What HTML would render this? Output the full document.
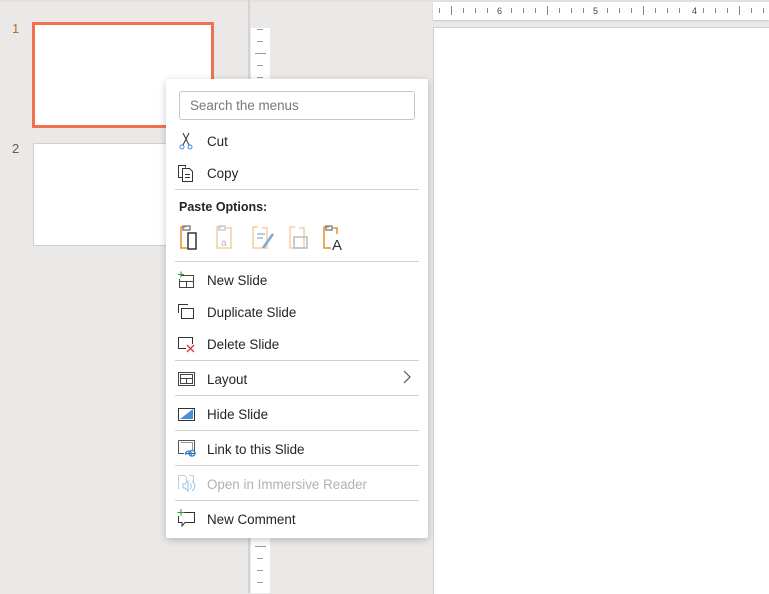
<!DOCTYPE html>
<html><head><style>
body{margin:0;width:769px;height:593px;overflow:hidden;background:#ebe9e7;font-family:"Liberation Sans",sans-serif;position:relative}
.a{position:absolute}
.menu{left:166px;top:79px;width:262px;height:459px;background:#fff;box-shadow:0 2px 8px rgba(0,0,0,.22);border-radius:2px}
.it{position:absolute;left:41px;font-size:13.4px;color:#252423}
.sep{position:absolute;left:9px;width:244px;height:1px;background:#d1d1d1}
.ic{position:absolute;left:11px}
</style></head><body>
<div class="a" style="left:0;top:0;width:769px;height:2px;background:#e3e1df"></div>
<div class="a" style="left:248px;top:0;width:2px;height:593px;background:#d6d4d2"></div>
<div class="a" style="left:12px;top:21px;font-size:13px;color:#c5691a">1</div>
<div class="a" style="left:32px;top:22px;width:176px;height:100px;border:3px solid #f07150;background:#fff"></div>
<div class="a" style="left:12px;top:141px;font-size:13px;color:#605e5c">2</div>
<div class="a" style="left:33px;top:143px;width:180px;height:101px;border:1px solid #d2d0ce;background:#fff"></div>
<div class="a" style="left:251px;top:28px;width:19px;height:565px;background:#fff"></div>
<svg class="a" style="left:251px;top:28px" width="19" height="565"><g stroke="#999">
<line x1="6" y1="1.5" x2="12" y2="1.5"/><line x1="6" y1="13.5" x2="12" y2="13.5"/><line x1="4" y1="25.5" x2="15" y2="25.5"/><line x1="6" y1="37.5" x2="12" y2="37.5"/><line x1="6" y1="49.5" x2="12" y2="49.5"/>
<line x1="4" y1="518.5" x2="15" y2="518.5"/><line x1="6" y1="530.5" x2="12" y2="530.5"/><line x1="6" y1="542.5" x2="12" y2="542.5"/><line x1="6" y1="554.5" x2="12" y2="554.5"/></g></svg>
<div class="a" style="left:433px;top:2px;width:336px;height:18px;background:#fff;box-shadow:0 1px 2px rgba(0,0,0,.15)"></div>
<svg class="a" style="left:433px;top:2px" width="336" height="18" font-size="9" fill="#444" font-family="Liberation Sans"><g stroke="#888">
<line x1="6.5" y1="6" x2="6.5" y2="11"/><line x1="18.5" y1="4" x2="18.5" y2="13"/><line x1="30.5" y1="6" x2="30.5" y2="11"/><line x1="42.5" y1="6" x2="42.5" y2="11"/><line x1="54.5" y1="6" x2="54.5" y2="11"/>
<line x1="78.5" y1="6" x2="78.5" y2="11"/><line x1="90.5" y1="6" x2="90.5" y2="11"/><line x1="102.5" y1="6" x2="102.5" y2="11"/><line x1="114.5" y1="4" x2="114.5" y2="13"/><line x1="126.5" y1="6" x2="126.5" y2="11"/><line x1="138.5" y1="6" x2="138.5" y2="11"/><line x1="150.5" y1="6" x2="150.5" y2="11"/>
<line x1="174.5" y1="6" x2="174.5" y2="11"/><line x1="186.5" y1="6" x2="186.5" y2="11"/><line x1="198.5" y1="6" x2="198.5" y2="11"/><line x1="210.5" y1="4" x2="210.5" y2="13"/><line x1="222.5" y1="6" x2="222.5" y2="11"/><line x1="234.5" y1="6" x2="234.5" y2="11"/><line x1="246.5" y1="6" x2="246.5" y2="11"/>
<line x1="270.5" y1="6" x2="270.5" y2="11"/><line x1="282.5" y1="6" x2="282.5" y2="11"/><line x1="294.5" y1="6" x2="294.5" y2="11"/><line x1="306.5" y1="4" x2="306.5" y2="13"/><line x1="318.5" y1="6" x2="318.5" y2="11"/><line x1="330.5" y1="6" x2="330.5" y2="11"/></g>
<text x="64" y="12">6</text><text x="160" y="12">5</text><text x="259" y="12">4</text></svg>
<div class="a" style="left:433px;top:27px;width:336px;height:566px;background:#fff;border-left:1px solid #d2d0ce;border-top:1px solid #d2d0ce"></div>

<div class="a menu">
<div class="a" style="left:13px;top:12px;width:234px;height:27px;border:1px solid #c8c6c4;border-radius:3px"></div>
<div class="it" style="left:24px;top:19px;color:#7a7775">Search the menus</div>
<svg class="ic" style="top:53px" width="20" height="18"><path d="M6 1 L12 13 M12 1 L6 13" stroke="#333" fill="none"/><circle cx="5" cy="15" r="2" stroke="#3b8ee0" fill="none"/><circle cx="13" cy="15" r="2" stroke="#3b8ee0" fill="none"/></svg>
<div class="it" style="top:55px">Cut</div>
<svg class="ic" style="top:85px" width="20" height="18"><path d="M5.5 13.5H1.5V1.5H8.5V3.5M5.5 4.5H12.5L15.5 7.5V17.5H5.5Z M8 10.5H13 M8 13.5H13" stroke="#333" fill="none"/></svg>
<div class="it" style="top:87px">Copy</div>
<div class="sep" style="top:110px"></div>
<div class="it" style="left:13px;top:121px;font-weight:bold;font-size:12.5px">Paste Options:</div>
<svg class="a" style="left:13px;top:145px" width="170" height="28">
<g fill="none" stroke-width="1.5"><path d="M7 3H2V24H8" stroke="#e8912a"/><path d="M4 2H11V6H4Z" stroke="#888"/><path d="M9 9H17V25H9Z" stroke="#333"/>
<path d="M43 3H38V24H52V4H47" stroke="#f3cda4"/><path d="M40 2H46V6H40Z" stroke="#ccc"/>
<path d="M79 3H74V24H88V4H83" stroke="#f3cda4"/><path d="M78 10H86M78 14H84" stroke="#9bb8e0"/><path d="M84 24L94 10" stroke="#7fa7d6" stroke-width="2.5"/>
<path d="M116 3H111V24H125V4H120" stroke="#f3cda4"/><path d="M115 13H128V24H115Z" stroke="#bbb"/>
<path d="M150 3H145V24H152M158 10V4H154" stroke="#e8912a"/><path d="M147 2H153V6H147Z" stroke="#888"/></g>
<text x="42" y="22" font-size="10" fill="#bbb" font-family="Liberation Sans">a</text>
<text x="153" y="26" font-size="15" fill="#333" font-family="Liberation Sans">A</text></svg>
<div class="sep" style="top:182px"></div>
<svg class="ic" style="top:192px" width="20" height="18"><path d="M4 4.5H16.5V16.5H2.5V8 M2.5 10.5H16.5 M9.5 10.5V16.5" stroke="#444" fill="none"/><path d="M1 3.5H7M4 0.5V6.5" stroke="#2c9a3a"/></svg>
<div class="it" style="top:194px">New Slide</div>
<svg class="ic" style="top:224px" width="20" height="18"><path d="M1.5 10V1.5H11 M4.5 5.5H16.5V15.5H4.5Z" stroke="#333" fill="none"/></svg>
<div class="it" style="top:226px">Duplicate Slide</div>
<svg class="ic" style="top:256px" width="20" height="18"><path d="M9 13.5H1.5V2.5H15.5V9" stroke="#333" fill="none"/><path d="M10 10L17 17M17 10L10 17" stroke="#e0323a" stroke-width="1.3"/></svg>
<div class="it" style="top:258px">Delete Slide</div>
<div class="sep" style="top:281px"></div>
<svg class="ic" style="top:291px" width="20" height="18"><path d="M1.5 2.5H17.5V15.5H1.5Z M3.5 4.5H15.5V13.5H3.5Z M3.5 8.5H15.5 M9.5 8.5V13.5" stroke="#444" fill="none"/></svg>
<div class="it" style="top:293px">Layout</div>
<svg class="a" style="left:236px;top:291px" width="10" height="14"><path d="M2 1L8 7L2 13" stroke="#555" fill="none" stroke-width="1.2"/></svg>
<div class="sep" style="top:316px"></div>
<svg class="ic" style="top:326px" width="20" height="18"><path d="M1.5 3.5H17.5V15.5H1.5Z" stroke="#333" fill="none"/><path d="M3 14L16 4V14Z" fill="#4a90d6"/></svg>
<div class="it" style="top:328px">Hide Slide</div>
<div class="sep" style="top:351px"></div>
<svg class="ic" style="top:360px" width="22" height="20"><path d="M1.5 1.5H17.5V14.5H9" stroke="#555" fill="none"/><path d="M1.5 1.5V14.5H7" stroke="#555" fill="none"/><path d="M3.5 3.5H15.5V11" stroke="#999" fill="none"/><path d="M9 16a3 2.5 0 1 1 5 0M12 14a3 2.5 0 1 1 6 0a3 2.5 0 0 1-6 1" stroke="#2f86d3" fill="none" stroke-width="1.3"/></svg>
<div class="it" style="top:363px">Link to this Slide</div>
<div class="sep" style="top:386px"></div>
<svg class="ic" style="top:395px" width="20" height="20"><path d="M1.5 15.5V1.5H7.5L9.5 3.5V8M12 1.5H16.5V8" stroke="#ccc" fill="none"/><path d="M6 10H8L11 7V17L8 14H6Z" stroke="#9ec3ea" fill="none"/><path d="M13 9a4 4 0 0 1 0 6M15 7a6 6 0 0 1 0 10" stroke="#9ec3ea" fill="none"/></svg>
<div class="it" style="top:398px;color:#b3b0ad">Open in Immersive Reader</div>
<div class="sep" style="top:421px"></div>
<svg class="ic" style="top:430px" width="20" height="20"><path d="M6 3.5H17.5V13.5H8L5 17V13.5H1.5V7" stroke="#333" fill="none"/><path d="M0.5 3.5H7.5M4 0V7" stroke="#2c9a3a"/></svg>
<div class="it" style="top:433px">New Comment</div>
</div>
</body></html>
